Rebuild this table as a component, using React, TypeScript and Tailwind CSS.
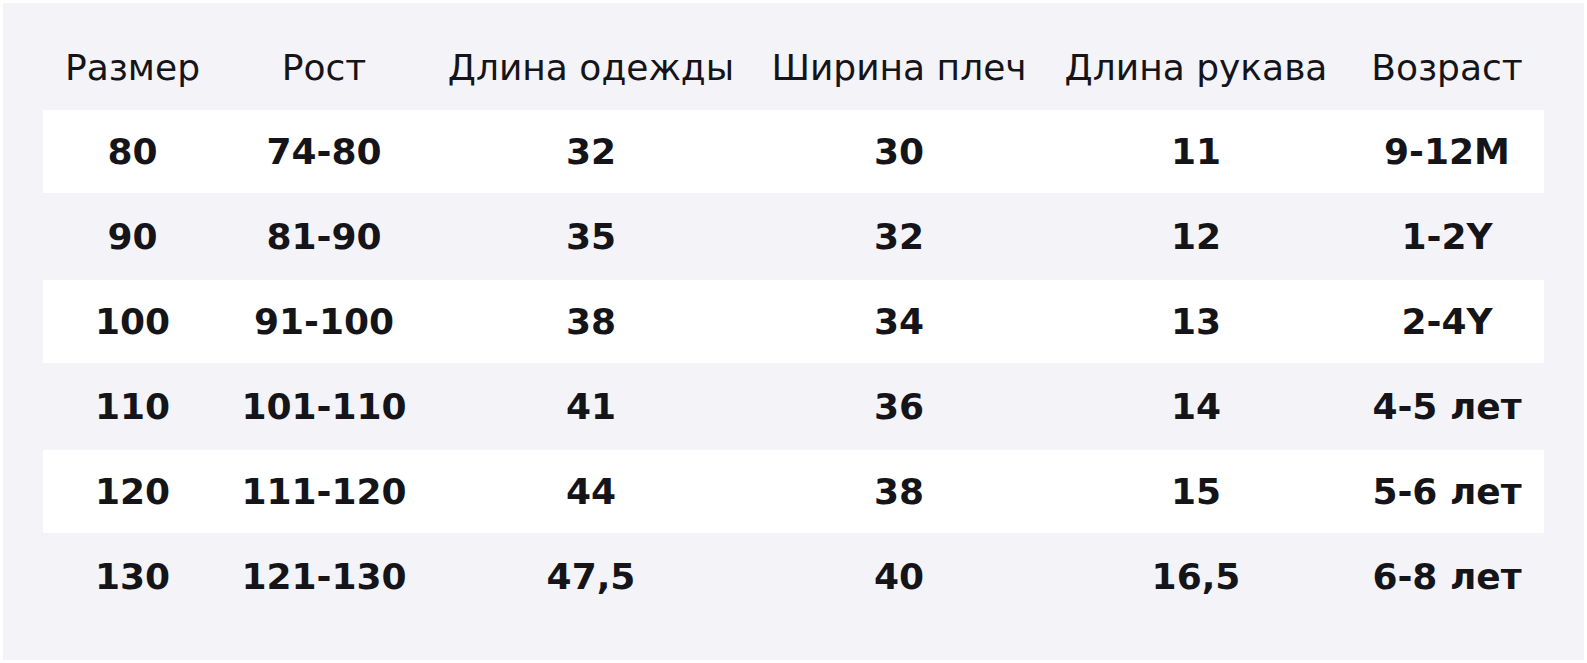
const headers = ["Размер", "Рост", "Длина одежды", "Ширина плеч", "Длина рукава", "Возраст"];

const rows = [
  ["80", "74-80", "32", "30", "11", "9-12M"],
  ["90", "81-90", "35", "32", "12", "1-2Y"],
  ["100", "91-100", "38", "34", "13", "2-4Y"],
  ["110", "101-110", "41", "36", "14", "4-5 лет"],
  ["120", "111-120", "44", "38", "15", "5-6 лет"],
  ["130", "121-130", "47,5", "40", "16,5", "6-8 лет"],
];

const cols = "grid grid-cols-[179px_204px_330px_286px_308px_194px]";

export default function App() {
  return (
    <div className="w-[1587px] h-[663px] bg-white p-[3px] font-['DejaVu_Sans',sans-serif] text-[#141419]">
      <div className="h-full bg-[#f3f3f8] px-[40px] pt-[22px]">
        {/* Header */}
        <div className={`${cols} h-[85px] items-center text-[36px]`}>
          {headers.map((h) => (
            <div key={h} className="text-center whitespace-nowrap">
              {h}
            </div>
          ))}
        </div>

        {/* Rows */}
        {rows.map((row, i) => (
          <div
            key={i}
            className={`${cols} items-center text-[36px] font-bold ${
              i % 2 === 0 ? "bg-white h-[83px]" : "h-[87px]"
            }`}
          >
            {row.map((cell, j) => (
              <div key={j} className="text-center whitespace-nowrap">
                {cell}
              </div>
            ))}
          </div>
        ))}
      </div>
    </div>
  );
}
